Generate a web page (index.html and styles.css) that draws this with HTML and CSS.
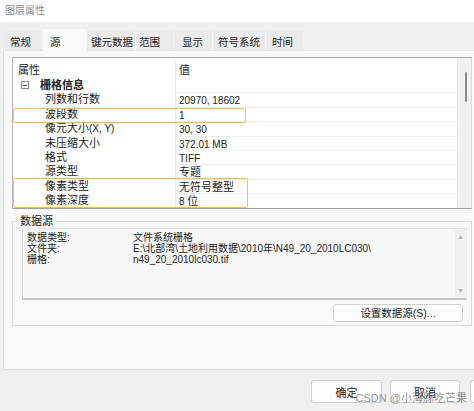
FILE: index.html
```html
<!DOCTYPE html>
<html lang="zh">
<head>
<meta charset="utf-8">
<title>图层属性</title>
<link rel="stylesheet" href="styles.css">
</head>
<body>
<div class="window">
  <div class="titlebar"><span class="title">图层属性</span></div>
  <div class="tabs">
    <div class="tab t1">常规</div>
    <div class="tab t2 active">源</div>
    <div class="tab t3">键元数据</div>
    <div class="tab t4">范围</div>
    <div class="tab t5">显示</div>
    <div class="tab t6">符号系统</div>
    <div class="tab t7">时间</div>
  </div>
  <div class="panel">
    <div class="grid">
      <div class="grid-body">
        <div class="row head"><div class="c name">属性</div><div class="c val">值</div></div>
        <div class="row group"><div class="c name"><span class="toggle"></span><b>栅格信息</b></div><div class="c val nol"></div></div>
        <div class="row"><div class="c name">列数和行数</div><div class="c val"><span class="en">20970, 18602</span></div></div>
        <div class="row"><div class="c name">波段数</div><div class="c val"><span class="en">1</span></div></div>
        <div class="row"><div class="c name">像元大小<span class="en">(X, Y)</span></div><div class="c val"><span class="en">30, 30</span></div></div>
        <div class="row"><div class="c name">未压缩大小</div><div class="c val"><span class="en">372.01 MB</span></div></div>
        <div class="row"><div class="c name">格式</div><div class="c val"><span class="en">TIFF</span></div></div>
        <div class="row"><div class="c name">源类型</div><div class="c val">专题</div></div>
        <div class="row"><div class="c name">像素类型</div><div class="c val">无符号整型</div></div>
        <div class="row"><div class="c name">像素深度</div><div class="c val"><span class="en">8 </span>位</div></div>
      </div>
      <div class="vscroll"><div class="thumb"></div></div>
      <div class="mark m1"></div>
      <div class="mark m2"></div>
    </div>
    <div class="ds-group">
      <div class="ds-head"><span class="ln-s"></span><span class="lbl">数据源</span><span class="ln"></span></div>
      <div class="ds">
        <div class="ds-box">
          <div class="ds-lines">
            <div>数据类型:</div><div>文件系统栅格</div>
            <div>文件夹:</div><div>E:\北部湾\土地利用数据\2010年\N49_20_2010LC030\</div>
            <div>栅格:</div><div>n49_20_2010lc030.tif</div>
          </div>
          <div class="ds-scroll"><span class="arrow">▲</span><span class="arrow">▼</span></div>
        </div>
        <div class="ds-actions"><button class="btn set">设置数据源(S)...</button></div>
      </div>
    </div>
  </div>
  <div class="footer">
    <button class="btn fbtn ok">确定</button>
    <button class="btn fbtn">取消</button>
    <button class="btn fbtn cut" aria-label="应用"></button>
  </div>
  <div class="watermark">CSDN @小海豚吃芒果</div>
</div>
</body>
</html>
```
FILE: styles.css
```css
* { box-sizing: border-box; }
html, body { margin: 0; padding: 0; }
body {
  width: 474px;
  height: 411px;
  overflow: hidden;
  background: #f0f0f0;
  font-family: "Liberation Sans", "Noto Sans CJK SC", sans-serif;
  color: #222;
}
.window { position: relative; width: 474px; height: 411px; overflow: hidden; }

.titlebar { height: 22px; background: #ffffff; padding-left: 5px; }
.title { font-size: 10px; line-height: 19px; color: #8a8a8a; }

.tabs {
  height: 28px;
  display: flex;
  align-items: flex-end;
  padding-left: 3px;
  background: #f0f0f0;
}
.tab {
  height: 19px;
  font-size: 10.5px;
  line-height: 19px;
  padding-top: 2px;
  background: #ebebeb;
  border-right: 1px solid #f6f6f6;
  color: #222;
  white-space: nowrap;
}
.tab.active {
  height: 22px;
  background: #f9f9f9;
  position: relative;
  z-index: 1;
  margin-bottom: -1px;
  padding-top: 3px;
  line-height: 20px;
}
.t1 { width: 40px; padding-left: 7px; }
.t2 { width: 44px; padding-left: 7px; }
.t3 { width: 49px; padding-left: 4px; }
.t4 { width: 38px; padding-left: 3px; }
.t5 { width: 39px; padding-left: 8px; }
.t6 { width: 53px; padding-left: 5px; }
.t7 { width: 37px; padding-left: 6px; border-right: none; }

.panel {
  margin-left: 3px;
  width: 471px;
  height: 320px;
  background: #f9f9f9;
  border-top: 1px solid #e6e6e6;
  border-left: 1px solid #dedede;
  border-bottom: 1px solid #e2e2e2;
  padding: 6px 2px 0 8px;
}

.grid {
  position: relative;
  display: flex;
  width: 460px;
  background: #ffffff;
  border-top: 1px solid #a8a8a8;
  border-left: 1px solid #b8b8b8;
  border-bottom: 1px solid #a0a0a0;
  border-right: 1px solid #dcdcdc;
}
.grid-body { flex: 1; }
.row {
  display: grid;
  grid-template-columns: 162px 1fr;
  height: 14.4px;
  font-size: 11px;
  line-height: 14.5px;
}
.row.head { height: 20px; line-height: 20px; padding-top: 2px; }
.c { white-space: nowrap; overflow: hidden; }
.name { padding-left: 32px; }
.val {
  padding-left: 3px;
  border-left: 1px solid #e6e6e6;
  border-top: 1px solid #eeeeee;
}
.head .name { padding-left: 5px; }
.head .val { border-top: none; padding-left: 3px; }
.val.nol { border-top: none; }
.group .name { padding-left: 8px; display: flex; align-items: center; }
.group b { margin-left: 11px; font-weight: bold; }
.toggle {
  position: relative;
  width: 8px;
  height: 8px;
  border: 1px solid #8a8a8a;
  flex: none;
}
.toggle::after {
  content: "";
  position: absolute;
  left: 1px;
  right: 1px;
  top: 2.5px;
  height: 1px;
  background: #555;
}
.en { font-size: 10px; }

.vscroll {
  width: 14px;
  background: #f1f1f1;
  border-left: 1px solid #e9e9e9;
  padding-top: 14px;
  padding-left: 7px;
}
.thumb { width: 2px; height: 30px; background: #8c8c8c; border-radius: 1px; }

.mark {
  position: absolute;
  left: 0;
  border: 1.5px solid #f0c24a;
  border-radius: 2px;
  pointer-events: none;
}
.m1 { top: 50px; width: 233px; height: 15px; }
.m2 { top: 120px; width: 235px; height: 30px; }

.ds-group { margin-top: 6px; width: 460px; }
.ds-head { display: flex; height: 12px; }
.ln-s, .ln {
  align-self: flex-end;
  height: 6px;
  border-top: 1px solid #dadada;
}
.ln-s { width: 6px; border-left: 1px solid #dadada; }
.ln { flex: 1; border-right: 1px solid #dadada; }
.lbl { font-size: 11px; line-height: 12px; padding: 0 2px; color: #222; }
.ds {
  border: 1px solid #dadada;
  border-top: none;
  padding: 1px 4px 3px 9px;
}
.ds-box {
  height: 72px;
  display: flex;
  background: #f8f8f8;
  border-top: 1px solid #e4e4e4;
  border-left: 1px solid #d4d4d4;
  border-bottom: 2px solid #c4c4c4;
  border-right: 1px solid #ececec;
}
.ds-lines {
  flex: 1;
  display: grid;
  grid-template-columns: 106px 1fr;
  align-content: start;
  padding: 3px 0 0 4px;
  font-size: 10px;
  line-height: 11px;
  white-space: nowrap;
}
.ds-scroll {
  width: 11px;
  background: #f0f0f0;
  display: flex;
  flex-direction: column;
  justify-content: space-between;
  align-items: center;
  padding: 4px 0 3px;
}
.arrow { font-size: 7px; line-height: 8px; color: #b4b4b4; }
.ds-actions { display: flex; justify-content: flex-end; margin-top: 4px; padding-right: 4px; }

.btn {
  font-family: "Liberation Sans", "Noto Sans CJK SC", sans-serif;
  background: #fdfdfd;
  border: 1px solid #d0d0d0;
  border-radius: 3px;
  color: #222;
  padding: 0;
  margin: 0;
}
.set { width: 130px; height: 18px; font-size: 10.5px; line-height: 16px; }

.footer {
  height: 41px;
  display: flex;
  justify-content: flex-end;
  gap: 8px;
  padding-top: 10px;
}
.fbtn { width: 70px; height: 23px; font-size: 11px; }
.fbtn.ok { width: 71px; }
.fbtn.cut { margin-left: 2px; margin-right: -66px; }

.watermark {
  position: absolute;
  right: 7px;
  bottom: 7px;
  font-size: 11px;
  line-height: 12px;
  color: rgba(120, 120, 120, 0.8);
  white-space: nowrap;
}
```
